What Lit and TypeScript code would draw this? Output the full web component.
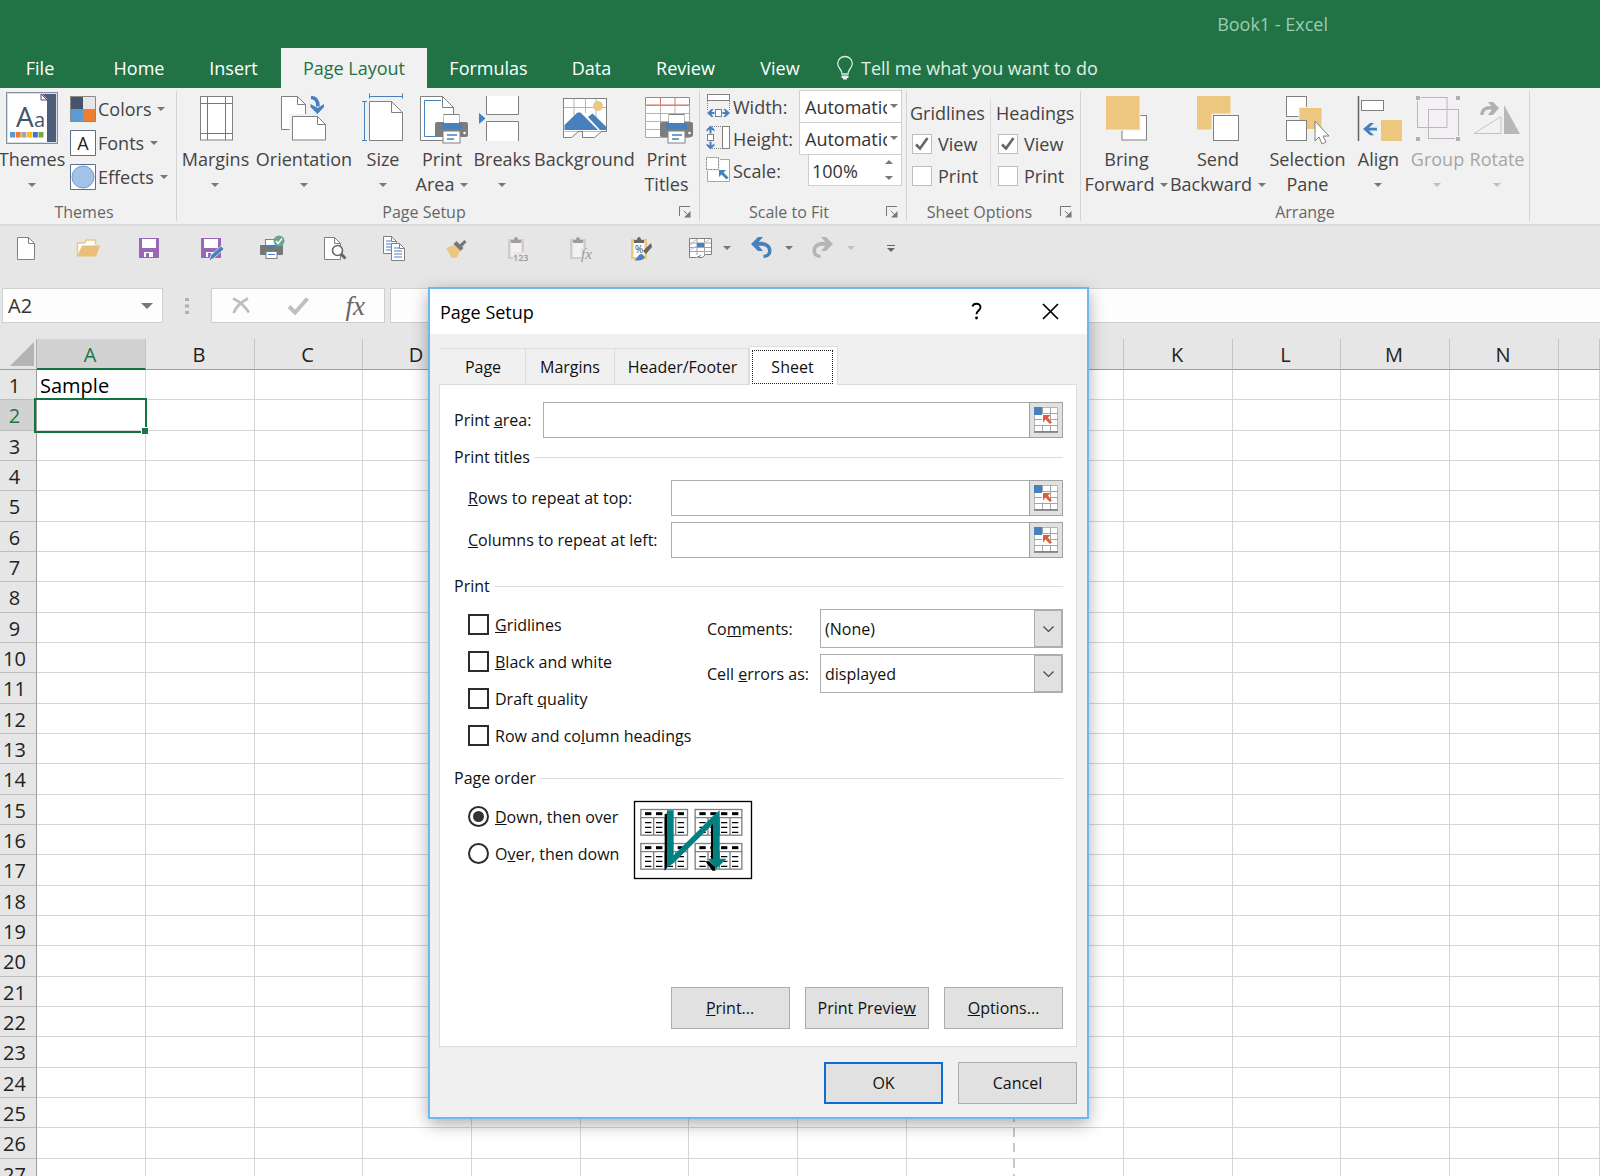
import { LitElement, html, svg, css, nothing, type TemplateResult } from "lit";
import { customElement, state } from "lit/decorators.js";
import { classMap } from "lit/directives/class-map.js";

const BLUE = "#4680bd";
const TAN = "#edc77f";
const GREY = "#808080";
const PURPLE = "#9a66b9";

type Art = TemplateResult | TemplateResult[];

/* Ribbon artwork shares one canvas, so a picture is a 52px window onto it. */
const bigIcon = (x: number, art: Art) =>
  html`<svg class="big-icon" viewBox="${x} 92 52 52" aria-hidden="true">${art}</svg>`;
const quickIcon = (x: number, art: Art) =>
  html`<svg class="quick-icon" viewBox="${x} 234 28 28" aria-hidden="true">${art}</svg>`;
const smallIcon = (y: number, art: Art) =>
  html`<svg class="small-icon" viewBox="706 ${y} 26 26" aria-hidden="true">${art}</svg>`;
const caret = html`<svg class="caret" viewBox="0 0 8 4" aria-hidden="true"><path d="M0 0h8L4 4z" fill="currentColor"/></svg>`;

const printer = (x: number, y: number) => svg`
  <g transform="translate(${x} ${y})">
    <rect x="0" y="8" width="33" height="15" rx="2" fill="#7d7d7d"/>
    <rect x="9" y=".5" width="15" height="11" fill="#fff" stroke="${GREY}"/>
    <path d="M6 9h21v6H6z" fill="${BLUE}"/>
    <path d="M9 1h15v8H9z" fill="#fff"/>
    <rect x="8" y="17" width="17" height="12" fill="#fff" stroke="${GREY}"/>
    <path d="M12 21h10M12 25h7" stroke="${BLUE}" stroke-width="1.4"/>
    <circle cx="29.5" cy="19" r="1.3" fill="#fff"/>
  </g>`;

const art = {
  themes: svg`
    <rect x="6.5" y="92.5" width="51" height="51" fill="#d8dee8" stroke="#8590a5"/>
    <rect x="8" y="94" width="48" height="48" fill="#fff"/>
    <path d="M47 94h9v48h-9z" fill="#4d5e7a"/>
    <path d="M41 94l6 6h-6z" fill="#fff" stroke="#44546a"/><path d="M42 94h5v5z" fill="#4d5e7a"/>
    <text x="16" y="127" font-size="28" fill="#44546a" font-family="Open Sans">A</text>
    <text x="34" y="127" font-size="20" fill="#44546a" font-family="Open Sans">a</text>
    ${["#5b9bd5", "#ed7d31", "#a5a5a5", "#ffc000", "#4472c4", "#70ad47"].map(
      (c, i) => svg`<rect x="${10 + i * 5.7}" y="132" width="5" height="5.5" fill="${c}"/>`
    )}`,
  margins: svg`
    <rect x="200.5" y="96.5" width="32" height="43.5" fill="#fff" stroke="${GREY}"/>
    <path d="M207.5 97v43M225.5 97v43M201 103.5h31M201 133.5h31" stroke="${BLUE}"/>`,
  orientation: svg`
    <path d="M281.5 96.5h16l8 8v25h-24z" fill="#fff" stroke="${GREY}"/>
    <path d="M297.5 96.5v8h8" fill="none" stroke="${GREY}"/>
    <path d="M289.5 114h37v28h-37z" fill="#f1f1f1"/>
    <path d="M292.5 116.5h25l8 8v15.5h-33z" fill="#fff" stroke="${GREY}"/>
    <path d="M317.5 116.5v8h8" fill="none" stroke="${GREY}"/>
    <path d="M311 97.5c5 0 7 3 7 9" fill="none" stroke="${BLUE}" stroke-width="3.6"/>
    <path d="M310.5 104l7.3 4 6.2-4v3l-6.5 7-7-7z" fill="${BLUE}"/>`,
  size: svg`
    <path d="M369.5 101.5h22l11 11v28h-33z" fill="#fff" stroke="${GREY}"/>
    <path d="M391.5 101.5v11h11" fill="none" stroke="${GREY}"/>
    <path d="M369.5 96.5h33M369.5 93.5v5M402.5 93.5v5M364.5 101v39.5M362 101.5h5M362 140.5h5" stroke="${BLUE}" fill="none"/>`,
  printArea: svg`
    <path d="M420.5 96.5h22l11 11v33h-33z" fill="#fff" stroke="${GREY}"/>
    <path d="M442.5 96.5v11h11" fill="none" stroke="${GREY}"/>
    <path d="M441 100.5h-16.5v36h12" fill="none" stroke="${BLUE}"/>
    ${printer(435, 114)}`,
  breaks: svg`
    <path d="M486.5 96v18.5h32V96M486.5 141v-19.5h32V141" fill="#fff" stroke="${GREY}"/>
    <path d="M479 113l6.5 5.5-6.5 5.5z" fill="${BLUE}"/>`,
  background: svg`
    <rect x="562.5" y="98.5" width="43" height="33" fill="#fff" stroke="${GREY}"/>
    <path d="M573 99v26M584.5 99v14M595 99v20M563 107.5h42" stroke="#b5b5b5"/>
    <circle cx="597" cy="106" r="5" fill="${TAN}"/>
    <path d="M563.5 130v-5l13-12.5h3l17.5 17.5zM587 117l4.5-3.5 13.5 13v3.5h-6z" fill="${BLUE}"/>
    <path d="M562.5 131.5v6h8l7-6h4v6h12l7-6" fill="#fff" stroke="${GREY}"/>`,
  printTitles: svg`
    <path d="M644.5 105.5h44v32h-44z" fill="#fff" stroke="#a8a8a8"/>
    <path d="M645 113.5h43M645 121.5h43M645 129.5h43M659.5 105v32M674 105v32" stroke="#b5b5b5"/>
    <path d="M644.5 97.5h44v7.5h-44zM659.5 97.5v7.5M674 97.5v7.5" fill="#fff" stroke="#d9705c"/>
    ${printer(659, 114)}`,
  bring: svg`
    <rect x="1121" y="115.5" width="24.5" height="24.5" fill="#fff" stroke="${GREY}"/>
    <rect x="1104.5" y="95.5" width="34.5" height="34.5" fill="${TAN}" stroke="#f1f1f1"/>`,
  send: svg`
    <rect x="1195" y="96" width="33.5" height="33.5" fill="${TAN}"/>
    <rect x="1209.5" y="113.5" width="30" height="28" fill="#f1f1f1"/>
    <rect x="1211.5" y="115.5" width="25" height="25" fill="#fff" stroke="${GREY}"/>`,
  selection: svg`
    <rect x="1284.5" y="96.5" width="20" height="20" fill="#fff" stroke="${GREY}"/>
    <rect x="1297" y="107.5" width="23" height="22" fill="${TAN}" stroke="#f1f1f1"/>
    <rect x="1284.5" y="120.5" width="20" height="20" fill="#fff" stroke="${GREY}"/>
    <path d="M1313 121v20l4-4 3 7 4-2-3-6h6z" fill="#fff" stroke="${GREY}"/>`,
  align: svg`
    <path d="M1353.5 96v45" stroke="#666" stroke-width="1.5"/>
    <rect x="1356.5" y="100.5" width="22" height="10" fill="#fff" stroke="${GREY}"/>
    <rect x="1376" y="120" width="21" height="21" fill="${TAN}"/>
    <path d="M1358 129l7-6h4l-5 4.7h8v2.8h-8l5 4.7h-4z" fill="${BLUE}"/>`,
  group: svg`
    <rect x="1412.5" y="97.5" width="29.5" height="30" fill="#f4f0f5" stroke="#b8b8b8"/>
    <rect x="1423.5" y="109.5" width="30" height="29" fill="#f4f0f5" stroke="#b8b8b8"/>
    <path d="M1423.5 109.5h18.5v18h-18.5z" fill="#f4f0f5" stroke="#b8b8b8"/>
    <path d="M1410 95h6v6h-6zM1450 95h6v6h-6zM1410 136h6v6h-6zM1450 136h6v6h-6z" fill="#f1f1f1"/>
    <path d="M1411 96h4v4h-4zM1451 96h4v4h-4zM1411 137h4v4h-4zM1451 137h4v4h-4z" fill="#b0b0b0"/>`,
  rotate: svg`
    <path d="M1468 133.5l27-17v17z" fill="#f4f0f5" stroke="#c4c4c4"/>
    <path d="M1498 105l16 29h-16z" fill="#b8b8b8"/>
    <path d="M1476 115c0-6 4-8 12-7" fill="none" stroke="#b0b0b0" stroke-width="3.4"/>
    <path d="M1482 102h5l6 6-6 7h-5l5-7z" fill="#b0b0b0"/>`,
};

const sheetPage = (x: number, y: number, w: number, h: number, f = 6) => svg`
  <path d="M${x} ${y}h${w - f}l${f} ${f}v${h - f}h-${w}z" fill="#fff" stroke="${GREY}"/>
  <path d="M${x + w - f} ${y}v${f}h${f}" fill="none" stroke="${GREY}"/>`;

const floppy = (x: number) => svg`
  <path d="M${x} 238h20v20h-20z" fill="${PURPLE}"/>
  <path d="M${x + 3} 239h14v9h-14zM${x + 5} 252h9v5h-9z" fill="#fff"/>
  <path d="M${x + 7} 253h3v4h-3z" fill="${PURPLE}"/>`;

const clipboard = (x: number, board: string, paper: string, clip: string) => svg`
  <path d="M${x} 239h16v20h-16z" fill="${board}"/>
  <path d="M${x + 2.5} 242h11v15h-11z" fill="${paper}"/>
  <path d="M${x + 3} 240h3c0-4 4-4 4 0h3v3h-10z" fill="${clip}"/>`;

const quickArt: [string, TemplateResult][] = [
  ["New", quickIcon(12, sheetPage(17.5, 237.5, 17, 22))],
  ["Open", quickIcon(73, svg`
    <path d="M76.5 256v-13h7l2-3h9v4" fill="#fff" stroke="${TAN}" stroke-width="1.5"/>
    <path d="M76 256.5l5-11h18l-4 11z" fill="#eabf78"/>`)],
  ["Save", quickIcon(134, floppy(138))],
  ["Save As", quickIcon(196, svg`${floppy(200)}
    <path d="M208 261l2-6 10-9 3 3-10 9z" fill="${BLUE}" stroke="#e6e6e6" stroke-width=".8"/>`)],
  ["Quick Print", quickIcon(258, svg`
    <rect x="260" y="245" width="23" height="10" rx="1" fill="#777"/>
    <rect x="265.5" y="239.5" width="11" height="6" fill="#fff" stroke="${GREY}"/>
    <path d="M265 245h13v3h-13z" fill="${BLUE}"/>
    <rect x="266" y="251.5" width="11" height="7" fill="#fff" stroke="${GREY}"/>
    <path d="M268 254.5h7" stroke="${BLUE}"/>
    <circle cx="279" cy="241" r="5.5" fill="#6ba58e"/>
    <path d="M276 241l2 2.5 4-5" fill="none" stroke="#fff" stroke-width="1.5"/>`)],
  ["Print Preview", quickIcon(320, svg`${sheetPage(324.5, 237.5, 16, 22)}
    <path d="M341 254l4.5 4.5" stroke="#666" stroke-width="3"/>
    <circle cx="337.5" cy="250.5" r="5" fill="#fff" stroke="#666" stroke-width="1.6"/>`)],
  ["Copy", quickIcon(381, svg`${sheetPage(383.5, 236.5, 13, 17, 5)}
    <path d="M386 241h5M386 244h8M386 247h8M386 250h8" stroke="${BLUE}"/>
    ${sheetPage(391.5, 243.5, 13, 17, 5)}
    <path d="M394 248h5M394 251h8M394 254h8M394 257h8" stroke="${BLUE}"/>`)],
  ["Format Painter", quickIcon(443, svg`
    <path d="M446 248l8-3 6 6-3 6.5-5 .5z" fill="${TAN}"/>
    <path d="M453.5 244l3-3 7 7-3 3z" fill="#777"/>
    <path d="M459 245l5.5-5 2 2-5 5.5z" fill="#777"/>`)],
  ["Paste Values", quickIcon(505, svg`
    ${clipboard(509, "#d0cccc", "#f4f0f5", "#9d9d9d")}
    <path d="M514 252h18v10h-18z" fill="#e6e6e6"/>
    <text x="514" y="261" font-size="9" font-weight="600" fill="#999" font-family="Open Sans">123</text>`)],
  ["Paste Formulas", quickIcon(567, svg`
    ${clipboard(571, "#d0cccc", "#f4f0f5", "#9d9d9d")}
    <path d="M582 248h10v14h-10z" fill="#e6e6e6"/>
    <text x="582" y="259" font-size="15" font-style="italic" fill="#999" font-family="Liberation Serif">fx</text>`)],
  ["Paste Formatting", quickIcon(628, svg`
    ${clipboard(632, TAN, "#fff", "#666")}
    <text x="636" y="253" font-size="10" fill="#444" font-family="Open Sans">%</text>
    <path d="M644 251l8-8 1 4-6 7z" fill="#666"/>
    <path d="M635 260c4-1 3-6 8-6l3 3c-2 4-7 4-11 3z" fill="${BLUE}"/>`)],
  ["Freeze Panes", quickIcon(689, svg`
    <path d="M689.5 238.5h22v16h-6l-3 3h-4l2-2-4 2h-7z" fill="#fff" stroke="${GREY}"/>
    <path d="M690 243h21M690 247.5h21M690 251.5h21M697 239v16M704.5 239v16" stroke="#a5a5a5"/>
    <path d="M690 245l7-6M690 250l7-4M704 243l6-4" stroke="#a8c4e0"/>
    <path d="M697 243h7v4h-7z" fill="${BLUE}"/>`)],
];

const undoShape = svg`<path d="M751 244l7-7h5l-4.5 5c8-1 13 3 13 8.5 0 5-3.5 7.5-8 7.5v-3.2c3 0 4.5-1.5 4.5-4 0-3.5-3.5-5.5-9.5-5l4.5 5.2h-5z" fill="currentColor"/>`;

interface BigButton { icon: TemplateResult; lines: string[]; menu: boolean; off?: boolean; }

const pageSetup: BigButton[] = [
  { icon: bigIcon(190, art.margins), lines: ["Margins"], menu: true },
  { icon: bigIcon(278, art.orientation), lines: ["Orientation"], menu: true },
  { icon: bigIcon(357, art.size), lines: ["Size"], menu: true },
  { icon: bigIcon(416, art.printArea), lines: ["Print", "Area"], menu: true },
  { icon: bigIcon(476, art.breaks), lines: ["Breaks"], menu: true },
  { icon: bigIcon(558, art.background), lines: ["Background"], menu: false },
  { icon: bigIcon(640, art.printTitles), lines: ["Print", "Titles"], menu: false },
];

const arrange: BigButton[] = [
  { icon: bigIcon(1100, art.bring), lines: ["Bring", "Forward"], menu: true },
  { icon: bigIcon(1190, art.send), lines: ["Send", "Backward"], menu: true },
  { icon: bigIcon(1280, art.selection), lines: ["Selection", "Pane"], menu: false },
  { icon: bigIcon(1348, art.align), lines: ["Align"], menu: true },
  { icon: bigIcon(1407, art.group), lines: ["Group"], menu: true, off: true },
  { icon: bigIcon(1465, art.rotate), lines: ["Rotate"], menu: true, off: true },
];

const columns = ["A", "B", "C", "D", "E", "F", "G", "H", "I", "J", "K", "L", "M", "N", ""];
const rows = Array.from({ length: 27 }, (_, i) => i + 1);

const miniTable = (x: number, y: number) => svg`
  <rect x="${x + 1.5}" y="${y + 1.5}" width="140" height="77" fill="#fff" stroke="#808080" stroke-width="4"/>
  <path d="M${x} ${y + 26}h143M${x + 40} ${y + 26}v52M${x + 74} ${y + 26}v52M${x + 106} ${y + 26}v52" stroke="#808080" stroke-width="4"/>
  ${[14, 47, 79, 112].map((dx) => svg`
    <path d="M${x + dx} ${y + 14}h19" stroke="#000" stroke-width="9"/>
    <path d="M${x + dx} ${y + 41}h19M${x + dx} ${y + 55}h19M${x + dx} ${y + 70}h19" stroke="#000" stroke-width="4"/>`)}`;

@customElement("app-root")
export class AppRoot extends LitElement {
  @state() private order = "down";

  static styles = css`
    :host { display: flex; flex-direction: column; height: 100vh; overflow: hidden; position: relative;
      background: #e6e6e6; color: #444; font: 18px/25px "Open Sans", "Noto Sans", sans-serif; }
    * { box-sizing: border-box; }
    button, input, select { font: inherit; color: inherit; margin: 0; padding: 0; border: 0; background: none; border-radius: 0; outline: 0; }
    button { white-space: nowrap; }
    svg { display: block; overflow: visible; }
    .caret { width: 8px; height: 4px; flex: none; color: #777; }
    .off { color: #a6a6a6; }
    .off .caret { color: #c0c0c0; }

    .titlebar { background: #217346; color: #9fcbb0; height: 48px; flex: none; display: flex; align-items: center; justify-content: flex-end; padding-right: 272px; }
    .tabs { background: #217346; height: 40px; flex: none; display: grid; grid-template-columns: 92px 94px 95px 146px 123px 83px 105px 84px 1fr; color: #fff; }
    .tab { text-align: center; }
    .tab.first { padding-right: 12px; }
    .tab.active { background: #f1f1f1; color: #217346; }
    .tell { display: flex; align-items: center; gap: 8px; padding-left: 15px; color: #e0efe5; }
    .bulb { width: 16px; height: 24px; }

    .ribbon { background: #f1f1f1; height: 138px; flex: none; display: flex; border-bottom: 2px solid #dcdcdc; padding-top: 3px; }
    .group { display: flex; flex-direction: column; border-right: 1px solid #d4d4d4; margin-bottom: 3px; }
    .group-body { flex: 1; display: flex; padding-top: 1px; }
    .group-foot { display: flex; align-items: center; height: 18px; font-size: 16px; color: #666; }
    .group-foot span { flex: 1; text-align: center; }
    .launch { width: 28px; height: 18px; display: grid; place-items: center; }
    .launch svg { width: 12px; height: 12px; }
    .g-themes { width: 177px; }
    .g-themes .group-foot { padding-right: 8px; }
    .g-setup { width: 523px; }
    .g-scale { width: 207px; }
    .g-sheet { width: 174px; }
    .g-arrange { width: 449px; }
    .setup-grid { display: grid; grid-template-columns: 77px 100px 58px 60px 60px 105px 59px; align-content: start; }
    .arrange-grid { display: grid; grid-template-columns: 87px 96px 83px 59px 59px 60px; align-content: start; padding-left: 2px; }
    .big { display: flex; flex-direction: column; align-items: center; gap: 3px; }
    .big-icon { width: 52px; height: 52px; flex: none; }
    .big-text { display: flex; flex-direction: column; align-items: center; }
    .big-line { height: 25px; display: flex; align-items: center; gap: 6px; }
    .theme-big { width: 64px; }
    .theme-list { display: flex; flex-direction: column; gap: 8px; padding: 4px 0 0 6px; align-items: flex-start; }
    .theme-item { display: flex; align-items: center; gap: 2px; height: 26px; line-height: 28px; }
    .theme-item .caret { margin-left: 4px; }
    .theme-item svg.swatch { width: 26px; height: 26px; }

    .scale-list { display: grid; grid-template-columns: 27px 1fr auto; grid-auto-rows: 32px; align-items: center; width: 202px; padding-left: 6px; margin-top: -2px; }
    .scale-list label, .tick label { padding-top: 2px; }
    .small-icon { width: 26px; height: 26px; }
    .pick { display: grid; align-items: center; width: 103px; height: 33px; }
    .pick > * { grid-area: 1 / 1; }
    .pick select { appearance: none; background: #fff; border: 1px solid #cfcfcf; height: 33px; width: 100%; padding: 2px 14px 0 5px; color: #333; overflow: hidden; text-overflow: clip; }
    .pick .caret { justify-self: end; margin-right: 4px; pointer-events: none; }
    .spin { justify-self: end; display: flex; width: 94px; height: 32px; background: #fff; border: 1px solid #cfcfcf; color: #333; }
    .spin input { flex: 1; min-width: 0; padding: 2px 0 0 3px; }
    .spin-keys { display: flex; flex-direction: column; width: 24px; }
    .spin-keys button { flex: 1; display: grid; place-items: center; }
    .spin-keys .up { transform: rotate(180deg); }

    .opts { display: grid; grid-template-columns: 83px 1fr; padding-top: 7px; width: 100%; }
    .opt { display: flex; flex-direction: column; padding-left: 3px; height: 88px; gap: 7px; line-height: 28px; }
    .opt > span { height: 25px; }
    .opt + .opt { border-left: 1px solid #dcdcdc; padding-left: 5px; }
    .tick { display: flex; align-items: center; gap: 6px; height: 25px; line-height: 25px; padding-left: 2px; }
    .tick-box { display: grid; place-items: center; }
    .tick-box > * { grid-area: 1 / 1; }
    .tick-box input { appearance: none; width: 20px; height: 20px; background: #fff; border: 1px solid #bdbdbd; }
    .tick-box svg { width: 14px; height: 14px; pointer-events: none; }
    .tick-box input:not(:checked) + svg { visibility: hidden; }

    .quick { height: 62px; flex: none; display: flex; align-items: center; padding: 0 0 18px 12px; }
    .quick-main { display: flex; justify-content: space-between; width: 705px; }
    .quick-icon { width: 28px; height: 28px; }
    .narrow { width: 12px; height: 28px; display: grid; place-items: center; margin-left: 4px; }
    .undo { margin-left: 14px; color: #4680bd; }
    .undo + .narrow, .redo + .narrow { margin-left: 8px; }
    .redo { margin-left: 14px; color: #b5b5b5; }
    .redo svg { transform: scaleX(-1); }
    .more { margin-left: 30px; width: 10px; }
    .more svg { width: 8px; height: 7px; }

    .formula { height: 35px; flex: none; display: flex; }
    .name { margin-left: 2px; width: 161px; display: flex; align-items: center; background: #fdfdfd; border: 1px solid #cfcfcf; padding-right: 9px; color: #333; font-size: 20px; }
    .name input { flex: 1; min-width: 0; padding-left: 5px; height: 33px; }
    .name .caret { width: 12px; height: 6px; }
    .grip { width: 48px; display: grid; place-items: center; }
    .grip svg { width: 4px; height: 16px; }
    .keys { width: 174px; background: #fdfdfd; border: 1px solid #cfcfcf; display: grid; grid-template-columns: repeat(3, 1fr); }
    .keys button { display: grid; place-items: center; }
    .keys svg { width: 20px; height: 18px; }
    .fx { font: italic 27px/30px "Liberation Serif", serif; color: #666; }
    .entry { flex: 1; margin-left: 5px; }
    .entry input { width: 100%; height: 35px; background: #fdfdfd; border: 1px solid #cfcfcf; border-right: 0; }

    .sheet { flex: 1; min-height: 0; overflow: hidden; margin-top: 16px; }
    table { border-collapse: separate; border-spacing: 0; table-layout: fixed; width: 100%; background: #fff; color: #222; font-size: 20px; line-height: 24px; }
    col { width: 109px; }
    col:nth-child(3n + 1) { width: 108px; }
    col.heads { width: 37px; }
    col.rest { width: auto; }
    th { font-weight: 400; background: #e6e6e6; padding: 2px 0 0; }
    thead th { height: 31px; border-right: 1px solid #c4c4c4; border-bottom: 1px solid #9c9c9c; padding-right: 2px; }
    thead th.active { background: #d2d2d2; color: #217346; border-bottom: 2px solid #107440; }
    thead th.corner { border-right-color: #b0b0b0; padding: 0; }
    .corner svg { width: 24px; height: 24px; margin-left: 10px; }
    tbody tr { height: 30px; }
    tbody tr:nth-child(3n + 2) { height: 31px; }
    tbody th { border-right: 1px solid #9c9c9c; border-bottom: 1px solid #bcbcbc; padding-right: 7px; }
    tbody th.active { background: #d2d2d2; color: #217346; }
    td { border-right: 1px solid #d6d6d6; border-bottom: 1px solid #d6d6d6; padding: 2px 3px 0; position: relative; color: #000; }
    td.break { border-right: 0; background: repeating-linear-gradient(#c8c8c8 0 9px, #fff 9px 15px) right / 2px 100% no-repeat; }
    .cursor { position: absolute; inset: -2px -2px -3px -3px; border: 2px solid #107440; z-index: 1; }
    .handle { position: absolute; right: -3px; bottom: -3px; width: 7px; height: 7px; background: #217346; border: solid #fff; border-width: 1px 0 0 1px; }

    .dialog { position: absolute; left: 428px; top: 287px; width: 661px; background: #f0f0f0; border: 2px solid #6cb9ea; color: #111; font-size: 16px; line-height: 20px; box-shadow: 0 5px 16px rgba(0, 0, 0, .32); z-index: 2; }
    .dialog-title { background: #fff; height: 45px; display: flex; align-items: center; padding-left: 10px; font-size: 18px; color: #000; }
    .dialog-title h1 { font: inherit; margin: 0; flex: 1; }
    .dialog-title button { width: 73px; height: 44px; display: grid; place-items: center; }
    .dialog-title .close { width: 74px; }
    .dialog-title svg { width: 17px; height: 17px; }
    .dialog-body { padding: 12px 10px 13px 9px; }
    .pages { display: flex; align-items: flex-end; margin-bottom: -1px; position: relative; }
    .pages button { height: 37px; border-top: 1px solid #dcdcdc; border-right: 1px solid #dcdcdc; }
    .pages .p1 { width: 87px; padding-left: 2px; }
    .pages .p2 { width: 89px; }
    .pages .p3 { width: 134px; padding-left: 2px; }
    .pages .p4 { width: 89px; height: 39px; background: #fff; border-left: 1px solid #dcdcdc; padding: 2px 4px 1px 2px; }
    .pages .focus { display: grid; place-items: center; height: 34px; border: 1px dotted #222; }
    .panel { background: #fff; border: 1px solid #dcdcdc; padding: 17px 13px 17px 14px; }
    .ref { display: grid; align-items: stretch; height: 36px; }
    .ref label { align-self: center; }
    .ref input { border: 1px solid #adadad; border-right: 0; background: #fff; min-width: 0; width: 100%; }
    .ref button { border: 1px solid #a2a2a2; background: #e1e1e1; display: grid; place-items: center; }
    .ref svg { width: 24px; height: 26px; }
    .ref.area { grid-template-columns: 89px 1fr 34px; }
    .ref.inset { grid-template-columns: 203px 1fr 34px; margin: 0 0 6px 14px; }
    .section { display: flex; align-items: center; gap: 4px; margin: 9px 0 13px; height: 20px; }
    .section::after { content: ""; flex: 1; height: 1px; background: #dcdcdc; }
    .section.print { margin-top: 18px; }
    .section.order { margin-top: 22px; }
    .print-grid { display: grid; grid-template-columns: 239px 1fr; padding-left: 14px; }
    .checks { display: flex; flex-direction: column; gap: 16px; padding-top: 5px; }
    .choice { display: flex; align-items: center; gap: 6px; height: 21px; }
    .choice input { appearance: none; width: 21px; height: 21px; border: 2px solid #2b2b2b; background: #fff; }
    .choice input[type="radio"] { border-radius: 50%; display: grid; place-items: center; }
    .choice input[type="radio"]:checked::before { content: ""; width: 11px; height: 11px; border-radius: 50%; background: #333; }
    .choices { display: grid; grid-template-columns: 113px 1fr; grid-auto-rows: 39px; row-gap: 6px; align-items: center; align-content: start; }
    .drop { display: grid; grid-template-columns: 1fr 29px; }
    .drop select { grid-area: 1 / 1 / 2 / 3; appearance: none; height: 39px; border: 1px solid #adadad; background: #fff; padding-left: 4px; width: 100%; }
    .drop .key { grid-area: 1 / 2; background: #e1e1e1; border: 1px solid #adadad; margin: 1px 1px 1px 0; display: grid; place-items: center; pointer-events: none; }
    .key svg { width: 11px; height: 6px; }
    .order-grid { display: flex; padding-left: 14px; gap: 15px; }
    .order-pic { width: 118px; height: 78px; }
    .push { display: flex; justify-content: flex-end; gap: 15px; margin-top: 108px; }
    .push button { min-width: 119px; height: 42px; background: #e1e1e1; border: 1px solid #adadad; padding: 0 12px; }
    .push.foot { margin-top: 15px; }
    .push .ok { border: 2px solid #0f6cd0; }
  `;

  private renderBig(b: BigButton) {
    return html`<button class=${classMap({ big: true, off: !!b.off })} ?disabled=${!!b.off}>
      ${b.icon}
      <span class="big-text">
        <span class="big-line">${b.lines[0]}</span>
        <span class="big-line">${b.lines[1] ?? nothing}${b.menu ? caret : nothing}</span>
      </span>
    </button>`;
  }

  private renderFoot(label: string, launch: boolean) {
    return html`<div class="group-foot"><span>${label}</span>${launch
      ? html`<button class="launch" aria-label="${label} settings"><svg viewBox="0 0 12 12"><path d="M.5 10V.5H11M5 5l3 3" fill="none" stroke="#777"/><path d="M11.5 5v6.500H5z" fill="#777"/></svg></button>`
      : nothing}</div>`;
  }

  private renderTick(id: string, label: string, on: boolean) {
    return html`<div class="tick"><span class="tick-box"><input type="checkbox" id=${id} .checked=${on}>
      <svg viewBox="0 0 14 14"><path d="M1 7.5l4 4L12.5 1" fill="none" stroke="#666" stroke-width="2.6"/></svg></span>
      <label for=${id}>${label}</label></div>`;
  }

  private renderRibbon() {
    return html`<div class="ribbon">
      <section class="group g-themes">
        <div class="group-body">
          <button class="big theme-big">${bigIcon(6, art.themes)}<span class="big-text"><span class="big-line">Themes</span><span class="big-line">${caret}</span></span></button>
          <div class="theme-list">
            <button class="theme-item"><svg class="swatch" viewBox="0 0 26 26"><path d="M0 0h13v13H0z" fill="#44546a"/><path d="M13 0h13v13H13z" fill="#e7e6e6"/><path d="M0 13h13v13H0z" fill="#5b9bd5"/><path d="M13 13h13v13H13z" fill="#ed7d31"/><path d="M.5.5h25v25H.5z" fill="none" stroke="#8a8a8a"/></svg>Colors ${caret}</button>
            <button class="theme-item"><svg class="swatch" viewBox="0 0 26 26"><path d="M.5.5h25v25H.5z" fill="#fff" stroke="#5f6f8a"/><text x="13" y="20" text-anchor="middle" font-size="18" fill="#222" font-family="Open Sans">A</text></svg>Fonts ${caret}</button>
            <button class="theme-item"><svg class="swatch" viewBox="0 0 26 26"><path d="M.5.5h25v25H.5z" fill="#fff" stroke="#5f6f8a"/><circle cx="13" cy="13" r="11" fill="#a3c2e8" stroke="#6a9fd8"/></svg>Effects ${caret}</button>
          </div>
        </div>
        ${this.renderFoot("Themes", false)}
      </section>
      <section class="group g-setup">
        <div class="group-body setup-grid">${pageSetup.map((b) => this.renderBig(b))}</div>
        ${this.renderFoot("Page Setup", true)}
      </section>
      <section class="group g-scale">
        <div class="group-body"><div class="scale-list">
          ${smallIcon(94, svg`<rect x="707.5" y="95.5" width="22" height="6" fill="#fff" stroke="${GREY}"/>
            <path d="M707.5 102v10M729.5 102v10" stroke="${GREY}" stroke-dasharray="1 1"/>
            <rect x="715.5" y="110.5" width="6" height="7" fill="#fff" stroke="${GREY}"/>
            <path d="M707 114l4.5-4h2l-2 3h3v2h-3l2 3h-2zM730 114l-4.5-4h-2l2 3h-3v2h3l-2 3h2z" fill="${BLUE}"/>`)}
          <label for="fit-width">Width:</label>
          <span class="pick"><select id="fit-width"><option>Automatic</option></select>${caret}</span>
          ${smallIcon(126, svg`<rect x="722.5" y="127.5" width="7" height="22" fill="#fff" stroke="${GREY}"/>
            <path d="M712 127.5h10M712 149.5h10" stroke="${GREY}" stroke-dasharray="1 1"/>
            <rect x="707.5" y="135.5" width="6" height="6" fill="#fff" stroke="${GREY}"/>
            <path d="M710.5 126.5l4 4v2l-3-2v4h-2v-4l-3 2v-2zM710.5 150.5l4-4v-2l-3 2v-4h-2v4l-3-2v2z" fill="${BLUE}"/>`)}
          <label for="fit-height">Height:</label>
          <span class="pick"><select id="fit-height"><option>Automatic</option></select>${caret}</span>
          ${smallIcon(158, svg`<path d="M707.5 160.5h22v22h-22z" fill="#fff" stroke="#a8a8a8"/>
            <path d="M706 158h14v14h-14z" fill="#f1f1f1"/>
            <path d="M706.5 158.5h12v12h-12z" fill="#fff" stroke="${GREY}" stroke-dasharray="2 1"/>
            <path d="M719 171h7l-2.5 2.5 5 5-2 2-5-5L719 178z" fill="${BLUE}"/>`)}
          <label for="fit-scale">Scale:</label>
          <span class="spin"><input id="fit-scale" value="100%"><span class="spin-keys"><button class="up" aria-label="Increase">${caret}</button><button aria-label="Decrease">${caret}</button></span></span>
        </div></div>
        ${this.renderFoot("Scale to Fit", true)}
      </section>
      <section class="group g-sheet">
        <div class="group-body"><div class="opts">
          <div class="opt"><span>Gridlines</span>${this.renderTick("grid-view", "View", true)}${this.renderTick("grid-print", "Print", false)}</div>
          <div class="opt"><span>Headings</span>${this.renderTick("head-view", "View", true)}${this.renderTick("head-print", "Print", false)}</div>
        </div></div>
        ${this.renderFoot("Sheet Options", true)}
      </section>
      <section class="group g-arrange">
        <div class="group-body arrange-grid">${arrange.map((b) => this.renderBig(b))}</div>
        ${this.renderFoot("Arrange", false)}
      </section>
    </div>`;
  }

  private renderSheet() {
    return html`<div class="sheet"><table>
      <colgroup><col class="heads">${columns.map((c) => html`<col class=${c ? "" : "rest"}>`)}</colgroup>
      <thead><tr><th class="corner"><svg viewBox="0 0 24 24"><path d="M24 0v24H0z" fill="#b4b4b4"/></svg></th>
        ${columns.map((c) => html`<th class=${c === "A" ? "active" : ""}>${c}</th>`)}</tr></thead>
      <tbody>${rows.map((r) => html`<tr><th class=${r === 2 ? "active" : ""}>${r}</th>
        ${columns.map((c) => html`<td class=${c === "I" ? "break" : ""}>${c === "A" && r === 1 ? "Sample" : nothing}${c === "A" && r === 2
          ? html`<span class="cursor"><span class="handle"></span></span>` : nothing}</td>`)}</tr>`)}</tbody>
    </table></div>`;
  }

  private renderRef(kind: string, id: string, label: TemplateResult) {
    return html`<div class="ref ${kind}"><label for=${id}>${label}</label><input id=${id}>
      <button aria-label="Select range"><svg viewBox="0 0 24 26"><path d="M.5.5h23v24H.5z" fill="#fff" stroke="#b5b5b5"/>
        <path d="M0 6.5h24M0 12.5h24M0 18.5h24M8.5 0v25M16.5 0v25" stroke="#a5a5a5"/><path d="M0 25h24" stroke="#777" stroke-width="1.5"/>
        <path d="M0 0h8v8H0z" fill="${BLUE}"/><path d="M8 7h8v8l3 3h-4l-3-3-4 3z" fill="#fff"/><path d="M9 8h7.500l-2.500 2.500 4 5-2 1.500-4.500-4.500-2.500 3z" fill="#d95f3d"/></svg></button></div>`;
  }

  private renderDrop(id: string, label: TemplateResult, value: string) {
    return html`<label for=${id}>${label}</label><span class="drop"><select id=${id}><option>${value}</option></select>
      <span class="key"><svg viewBox="0 0 11 6"><path d="M.5.5l5 5 5-5" fill="none" stroke="#444" stroke-width="1.2"/></svg></span></span>`;
  }

  private renderCheck(id: string, label: TemplateResult) {
    return html`<div class="choice"><input type="checkbox" id=${id}><label for=${id}>${label}</label></div>`;
  }

  private renderOrder(value: string, label: TemplateResult) {
    return html`<div class="choice"><input type="radio" name="order" id=${value} .checked=${this.order === value}
      @change=${() => (this.order = value)}><label for=${value}>${label}</label></div>`;
  }

  private renderDialog() {
    return html`<div class="dialog" role="dialog" aria-labelledby="dialog-title">
      <div class="dialog-title"><h1 id="dialog-title">Page Setup</h1>
        <button aria-label="Help"><svg viewBox="0 0 17 17"><path d="M4.5 3.5C5 1.5 6.5.8 8.5.8c2.5 0 4 1.4 4 3.4 0 3-4 3.6-4 7" fill="none" stroke="#000" stroke-width="1.9"/><circle cx="8.5" cy="15" r="1.4"/></svg></button>
        <button class="close" aria-label="Close"><svg viewBox="0 0 17 17"><path d="M1 1l15 15M16 1L1 16" stroke="#000" stroke-width="1.7"/></svg></button>
      </div>
      <div class="dialog-body">
        <div class="pages" role="tablist">
          <button class="p1" role="tab">Page</button><button class="p2" role="tab">Margins</button><button class="p3" role="tab">Header/Footer</button>
          <button class="p4" role="tab" aria-selected="true"><span class="focus">Sheet</span></button>
        </div>
        <div class="panel">
          ${this.renderRef("area", "print-area", html`Print <u>a</u>rea:`)}
          <div class="section">Print titles</div>
          ${this.renderRef("inset", "rows-top", html`<u>R</u>ows to repeat at top:`)}
          ${this.renderRef("inset", "cols-left", html`<u>C</u>olumns to repeat at left:`)}
          <div class="section print">Print</div>
          <div class="print-grid">
            <div class="checks">
              ${this.renderCheck("gridlines", html`<u>G</u>ridlines`)}
              ${this.renderCheck("mono", html`<u>B</u>lack and white`)}
              ${this.renderCheck("draft", html`Draft <u>q</u>uality`)}
              ${this.renderCheck("headings", html`Row and co<u>l</u>umn headings`)}
            </div>
            <div class="choices">
              ${this.renderDrop("comments", html`Co<u>m</u>ments:`, "(None)")}
              ${this.renderDrop("errors", html`Cell <u>e</u>rrors as:`, "displayed")}
            </div>
          </div>
          <div class="section order">Page order</div>
          <div class="order-grid">
            <div class="checks">
              ${this.renderOrder("down", html`<u>D</u>own, then over`)}
              ${this.renderOrder("over", html`O<u>v</u>er, then down`)}
            </div>
            <svg class="order-pic" viewBox="611 124 354 234" aria-hidden="true">
              <rect x="612.5" y="125.5" width="351" height="231" fill="#fff" stroke="#000" stroke-width="4"/>
              ${miniTable(630, 148)}${miniTable(793, 148)}${miniTable(630, 250)}${miniTable(793, 250)}
              <path d="M703 163h10v156l-10 15zM842 190h9v115h-9zM825 305h12l18 18v10h-9z" fill="#000"/>
              <path d="M710 152h20v135l118-118 20-17v145h20l-30 31-25-31h15V193L730 310l-20 14z" fill="#008080"/>
            </svg>
          </div>
          <div class="push"><button><u>P</u>rint...</button><button>Print Previe<u>w</u></button><button><u>O</u>ptions...</button></div>
        </div>
        <div class="push foot"><button class="ok">OK</button><button>Cancel</button></div>
      </div>
    </div>`;
  }

  render() {
    return html`
      <header class="titlebar">Book1 - Excel</header>
      <nav class="tabs">
        ${["File", "Home", "Insert", "Page Layout", "Formulas", "Data", "Review", "View"].map(
          (t) => html`<button class=${classMap({ tab: true, first: t === "File", active: t === "Page Layout" })}>${t}</button>`)}
        <button class="tell"><svg class="bulb" viewBox="0 0 16 24"><path d="M5 18c0-5-4.3-5.5-4.3-10.5a7.3 7 0 0 1 14.6 0C15.3 12.5 11 13 11 18z" fill="none" stroke="#d9ebe0" stroke-width="1.3"/><path d="M4.5 19.5h7V22h-1.5v1.5h-4V22H4.5z" fill="#e6f2ea"/></svg>Tell me what you want to do</button>
      </nav>
      ${this.renderRibbon()}
      <div class="quick">
        <div class="quick-main">${quickArt.map(([label, icon]) => html`<button aria-label=${label}>${icon}</button>`)}</div>
        <button class="narrow" aria-label="Freeze options">${caret}</button>
        <button class="undo" aria-label="Undo">${quickIcon(747, undoShape)}</button>
        <button class="narrow" aria-label="Undo list">${caret}</button>
        <button class="redo" aria-label="Redo">${quickIcon(747, undoShape)}</button>
        <button class="narrow off" aria-label="Redo list">${caret}</button>
        <button class="more" aria-label="Customize toolbar"><svg viewBox="0 0 8 7"><path d="M0 .5h8" stroke="#666"/><path d="M0 3h8L4 7z" fill="#666"/></svg></button>
      </div>
      <div class="formula">
        <div class="name"><input aria-label="Name box" value="A2">${caret}</div>
        <div class="grip"><svg viewBox="0 0 4 16"><path d="M0 0h4v3H0zM0 6.5h4v3H0zM0 13h4v3H0z" fill="#b0b0b0"/></svg></div>
        <div class="keys">
          <button aria-label="Cancel entry"><svg viewBox="0 0 20 18"><path d="M2 1.5c7 3 12 8 16 14M17 1.5C10 5 5 10 2.5 16" fill="none" stroke="#bdbdbd" stroke-width="2.6"/></svg></button>
          <button aria-label="Accept entry"><svg viewBox="0 0 20 18"><path d="M1 9.5l6 6L19.5 1.5" fill="none" stroke="#c0c0c0" stroke-width="4"/></svg></button>
          <button class="fx" aria-label="Insert function">fx</button>
        </div>
        <div class="entry"><input aria-label="Formula bar"></div>
      </div>
      ${this.renderSheet()}
      ${this.renderDialog()}
    `;
  }
}
